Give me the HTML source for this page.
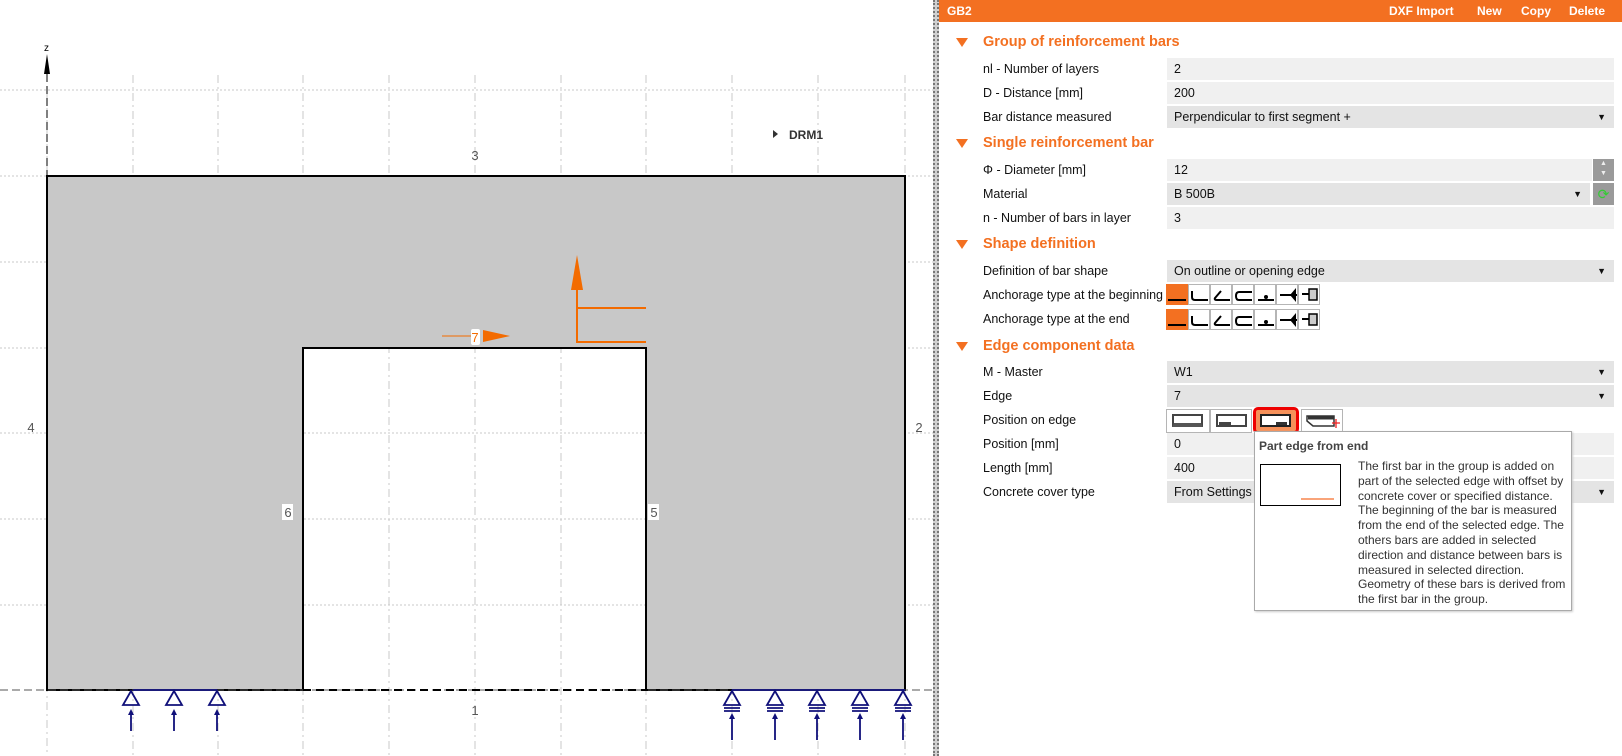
<!DOCTYPE html>
<html><head><meta charset="utf-8"><style>
*{margin:0;padding:0;box-sizing:border-box}
body{width:1622px;height:756px;overflow:hidden;background:#fff;font-family:"Liberation Sans",sans-serif;position:relative}
.abs{position:absolute}
.hdr{left:939px;top:0;width:683px;height:22px;background:#f37021;color:#fff;font-weight:bold;font-size:12px}
.hdr span{position:absolute;top:4px}
.h{position:absolute;left:983px;color:#f37021;font-weight:bold;font-size:14.5px}
.tri{position:absolute;left:956px;width:0;height:0;border-left:6px solid transparent;border-right:6px solid transparent;border-top:9px solid #f37021}
.l{position:absolute;left:983px;font-size:12.5px;color:#111}
.in{position:absolute;left:1167px;width:447px;height:22px;background:#f0f0f0;font-size:12.5px;line-height:22px;padding:0 7px;color:#111}
.dd{background:#e4e4e4}
.dd:after{content:"\25BC";position:absolute;right:8px;top:0;font-size:9px}
.pb{position:absolute;top:409px;height:24px;border:1px solid #b5b5b5;background:#fff}
</style></head><body>
<svg class="abs" style="left:0;top:0" width="933" height="756">
<g stroke="#c8c8c8" stroke-width="1" stroke-dasharray="8 4 2 4">
<line x1="47" y1="90" x2="47" y2="756"/><line x1="133" y1="75" x2="133" y2="756"/><line x1="218" y1="75" x2="218" y2="756"/><line x1="303" y1="75" x2="303" y2="756"/><line x1="389" y1="75" x2="389" y2="756"/><line x1="475" y1="75" x2="475" y2="756"/><line x1="561" y1="75" x2="561" y2="756"/><line x1="646" y1="75" x2="646" y2="756"/><line x1="732" y1="75" x2="732" y2="756"/><line x1="818" y1="75" x2="818" y2="756"/><line x1="905" y1="75" x2="905" y2="756"/>
</g>
<g stroke="#c8c8c8" stroke-dasharray="2 2">
<line x1="0" y1="90" x2="933" y2="90"/><line x1="0" y1="262" x2="933" y2="262"/><line x1="0" y1="433" x2="933" y2="433"/><line x1="0" y1="605" x2="933" y2="605"/>
<line x1="0" y1="176" x2="933" y2="176"/><line x1="0" y1="348" x2="933" y2="348"/><line x1="0" y1="519" x2="933" y2="519"/>
</g>
<path d="M47 176H905V690H646V348H303V690H47Z" fill="#c8c8c8" stroke="#000" stroke-width="2"/>
<line x1="0" y1="690" x2="933" y2="690" stroke="#555" stroke-dasharray="8 4"/>
<line x1="303" y1="690" x2="646" y2="690" stroke="#000" stroke-width="2" stroke-dasharray="8 5"/>
<line x1="133" y1="690" x2="217" y2="690" stroke="#1a1a7a" stroke-width="2"/>
<line x1="732" y1="690" x2="905" y2="690" stroke="#1a1a7a" stroke-width="2"/>
<g fill="none" stroke="#10107a" stroke-width="1.8">
<path d="M131 691L123 705H139Z"/><path d="M174 691L166 705H182Z"/><path d="M217 691L209 705H225Z"/>
<path d="M732 691L724 705H740Z"/><path d="M775 691L767 705H783Z"/><path d="M817 691L809 705H825Z"/><path d="M860 691L852 705H868Z"/><path d="M903 691L895 705H911Z"/>
<path d="M724 708H740M724 711H740M767 708H783M767 711H783M809 708H825M809 711H825M852 708H868M852 711H868M895 708H911M895 711H911"/>
<path d="M131 731V712M174 731V712M217 731V712M732 740V716M775 740V716M817 740V716M860 740V716M903 740V716"/>
</g>
<g fill="#10107a"><path d="M131 709l-3 6h6z"/><path d="M174 709l-3 6h6z"/><path d="M217 709l-3 6h6z"/><path d="M732 713l-3 6h6z"/><path d="M775 713l-3 6h6z"/><path d="M817 713l-3 6h6z"/><path d="M860 713l-3 6h6z"/><path d="M903 713l-3 6h6z"/></g>
<line x1="47" y1="74" x2="47" y2="176" stroke="#000" stroke-dasharray="8 4"/>
<path d="M47 54L44 74H50Z" fill="#000"/>
<text x="44" y="51" font-size="10" fill="#000" font-family="Liberation Sans">z</text>
<path d="M773 130v8l5-4z" fill="#333"/>
<text x="789" y="139" font-size="12" fill="#333" font-weight="bold" font-family="Liberation Sans">DRM1</text>
<g font-size="13" fill="#555" font-family="Liberation Sans" text-anchor="middle">
<text x="475" y="160">3</text><text x="475" y="715">1</text><text x="31" y="432">4</text><text x="919" y="432">2</text>
<rect x="282" y="504" width="11" height="16" fill="#fff"/><text x="288" y="517">6</text>
<rect x="648" y="504" width="11" height="16" fill="#fff"/><text x="654" y="517">5</text>
</g>
<g stroke="#f36b00" fill="#f36b00">
<line x1="577" y1="285" x2="577" y2="343" stroke-width="2"/><path d="M577 255L571 290H583Z" stroke="none"/>
<line x1="577" y1="308" x2="646" y2="308" stroke-width="2"/><line x1="577" y1="342" x2="646" y2="342" stroke-width="2"/>
<line x1="442" y1="336" x2="480" y2="336" stroke-width="1"/><path d="M483 330L510 336L483 342Z" stroke="none"/>
</g>
<rect x="471" y="329" width="9" height="16" rx="2" fill="#fff"/>
<text x="475" y="342" font-size="13" fill="#f36b00" text-anchor="middle" font-family="Liberation Sans">7</text>
</svg>
<div class="abs" style="left:933px;top:0;width:6px;height:756px;background:#d0d0d0;border-left:2px dotted #777;border-right:2px dotted #777"></div>
<div class="abs hdr"><span style="left:8px">GB2</span><span style="left:450px">DXF Import</span><span style="left:538px">New</span><span style="left:582px">Copy</span><span style="left:630px">Delete</span></div>

<div class="tri" style="top:38px"></div><div class="h" style="top:34px">Group of reinforcement bars</div>
<div class="l" style="top:62px">nl - Number of layers</div><div class="in" style="top:58px">2</div>
<div class="l" style="top:86px">D - Distance [mm]</div><div class="in" style="top:82px">200</div>
<div class="l" style="top:110px">Bar distance measured</div><div class="in dd" style="top:106px">Perpendicular to first segment +</div>

<div class="tri" style="top:139px"></div><div class="h" style="top:135px">Single reinforcement bar</div>
<div class="l" style="top:163px">Φ - Diameter [mm]</div><div class="in" style="top:159px;width:425px">12</div>
<div class="abs" style="left:1593px;top:159px;width:21px;height:22px;background:#9a9a9a;color:#eee;font-size:7px;text-align:center;line-height:10px">▲<br>▼</div>
<div class="l" style="top:187px">Material</div><div class="in dd" style="top:183px;width:423px">B 500B</div>
<div class="abs" style="left:1593px;top:183px;width:21px;height:22px;background:#9a9a9a;color:#3c3;font-size:14px;text-align:center;line-height:22px">⟳</div>
<div class="l" style="top:211px">n - Number of bars in layer</div><div class="in" style="top:207px">3</div>

<div class="tri" style="top:240px"></div><div class="h" style="top:236px">Shape definition</div>
<div class="l" style="top:264px">Definition of bar shape</div><div class="in dd" style="top:260px">On outline or opening edge</div>
<div class="l" style="top:288px">Anchorage type at the beginning</div>
<div class="l" style="top:312px">Anchorage type at the end</div>
<svg class="abs" style="left:1166px;top:284px" width="156" height="46">
<g id="r">
<rect x="0" y="0" width="22" height="21" fill="#f37021"/>
<g fill="#fff" stroke="#b5b5b5"><rect x="22.5" y=".5" width="21" height="20"/><rect x="44.5" y=".5" width="21" height="20"/><rect x="66.5" y=".5" width="21" height="20"/><rect x="88.5" y=".5" width="21" height="20"/><rect x="110.5" y=".5" width="21" height="20"/><rect x="132.5" y=".5" width="21" height="20"/></g>
<g fill="none" stroke="#000" stroke-width="2">
<path d="M2 16H20"/><path d="M26 7V13Q26 16 29 16H42"/><path d="M55 7L49 14Q48 16 51 16H64"/><path d="M86 8H73Q70 8 70 12Q70 16 73 16H86"/><path d="M92 16H108"/><path d="M114 11H131"/><path d="M136 10H143"/>
</g>
<circle cx="100" cy="13" r="2"/><path d="M124 11L130 4V18Z"/><rect x="143" y="5" width="8" height="11" fill="#ccc" stroke="#000" stroke-width="1.5"/>
</g>
<use href="#r" y="25"/>
</svg>

<div class="tri" style="top:342px"></div><div class="h" style="top:338px">Edge component data</div>
<div class="l" style="top:365px">M - Master</div><div class="in dd" style="top:361px">W1</div>
<div class="l" style="top:389px">Edge</div><div class="in dd" style="top:385px">7</div>
<div class="l" style="top:413px">Position on edge</div>
<div class="pb" style="left:1166px;width:44px"><div class="abs" style="left:5px;top:4px;width:31px;height:13px;border:2px solid #444;border-bottom:4px solid #555"></div></div>
<div class="pb" style="left:1210px;width:42px"><div class="abs" style="left:5px;top:4px;width:31px;height:13px;border:2px solid #444"><div class="abs" style="left:1px;bottom:0;width:12px;height:3px;background:#444"></div></div></div>
<div class="pb" style="left:1253px;width:46px;top:407px;height:27px;border:3px solid #e00;border-radius:5px;background:#f6915a"><div class="abs" style="left:4px;top:4px;width:31px;height:13px;border:2px solid #222;background:#fff"><div class="abs" style="right:2px;bottom:0;width:11px;height:3px;background:#333"></div></div></div>
<div class="pb" style="left:1301px;width:42px"><svg width="40" height="22"><path d="M5 6H32V16H11L5 11Z" fill="none" stroke="#333" stroke-width="1.5"/><path d="M6 8H32" stroke="#333" stroke-width="3"/><path d="M30 13H38M34 9V18" stroke="#e22" stroke-width="1.3"/></svg></div>
<div class="l" style="top:437px">Position [mm]</div><div class="in" style="top:433px">0</div>
<div class="l" style="top:461px">Length [mm]</div><div class="in" style="top:457px">400</div>
<div class="l" style="top:485px">Concrete cover type</div><div class="in dd" style="top:481px">From Settings</div>

<div class="abs" style="left:1254px;top:431px;width:318px;height:180px;background:#fff;border:1px solid #aaa;box-shadow:1px 1px 2px #ccc">
<div class="abs" style="left:4px;top:7px;font-weight:bold;font-size:12px;color:#444">Part edge from end</div>
<div class="abs" style="left:5px;top:32px;width:81px;height:42px;border:1px solid #000"><div class="abs" style="left:40px;top:33px;width:33px;height:2px;background:#f9a47a"></div></div>
<div class="abs" style="left:103px;top:27px;white-space:nowrap;font-size:12px;line-height:14.8px;color:#333">The first bar in the group is added on<br>part of the selected edge with offset by<br>concrete cover or specified distance.<br>The beginning of the bar is measured<br>from the end of the selected edge. The<br>others bars are added in selected<br>direction and distance between bars is<br>measured in selected direction.<br>Geometry of these bars is derived from<br>the first bar in the group.</div>
</div>
</body></html>
